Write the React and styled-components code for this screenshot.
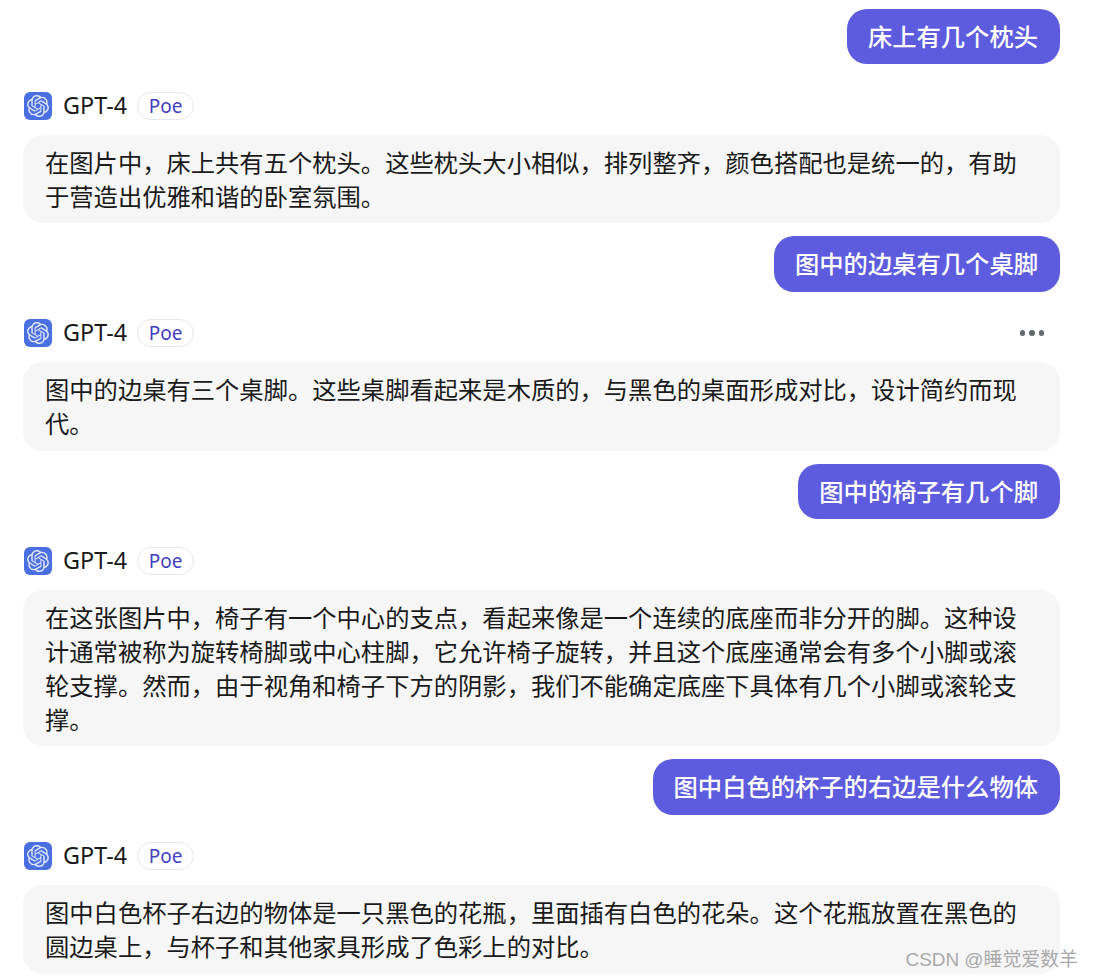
import styled, { createGlobalStyle } from "styled-components";
import { SiOpenai } from "react-icons/si";

const Global = createGlobalStyle`
  body {
    margin: 0;
    background: #fff;
    font-family: "Noto Sans", "Noto Sans CJK SC", sans-serif;
  }
`;

const messages = [
  {
    question: "床上有几个枕头",
    answer: "在图片中，床上共有五个枕头。这些枕头大小相似，排列整齐，颜色搭配也是统一的，有助于营造出优雅和谐的卧室氛围。",
  },
  {
    question: "图中的边桌有几个桌脚",
    answer: "图中的边桌有三个桌脚。这些桌脚看起来是木质的，与黑色的桌面形成对比，设计简约而现代。",
    hovered: true,
  },
  {
    question: "图中的椅子有几个脚",
    answer: "在这张图片中，椅子有一个中心的支点，看起来像是一个连续的底座而非分开的脚。这种设计通常被称为旋转椅脚或中心柱脚，它允许椅子旋转，并且这个底座通常会有多个小脚或滚轮支撑。然而，由于视角和椅子下方的阴影，我们不能确定底座下具体有几个小脚或滚轮支撑。",
  },
  {
    question: "图中白色的杯子的右边是什么物体",
    answer: "图中白色杯子右边的物体是一只黑色的花瓶，里面插有白色的花朵。这个花瓶放置在黑色的圆边桌上，与杯子和其他家具形成了色彩上的对比。",
  },
];

export default function App() {
  return (
    <>
      <Global />
      <Page>
        {messages.map((m) => (
          <Exchange key={m.question}>
            <UserBubble>{m.question}</UserBubble>
            <BotHeader>
              <BotInfo>
                <Avatar>
                  <SiOpenai size={22} color="#dfe6fb" />
                </Avatar>
                <BotName>GPT-4</BotName>
                <Tag>Poe</Tag>
              </BotInfo>
              {m.hovered && (
                <More>
                  <Dot />
                  <Dot />
                  <Dot />
                </More>
              )}
            </BotHeader>
            <BotBubble>{m.answer}</BotBubble>
          </Exchange>
        ))}
        <Watermark>CSDN @睡觉爱数羊</Watermark>
      </Page>
    </>
  );
}

const Page = styled.div`
  position: relative;
  box-sizing: border-box;
  width: 1093px;
  height: 979px;
  overflow: hidden;
  padding: 8.8px 33px 0 23px;
  display: flex;
  flex-direction: column;
  gap: 12.8px;
`;

const Exchange = styled.div`
  display: flex;
  flex-direction: column;
`;

const UserBubble = styled.div`
  align-self: flex-end;
  padding: 11px 22px 10.6px 21px;
  background: #5d5cde;
  border-radius: 20px;
  color: #fff;
  font-size: 24.3px;
  font-weight: 500;
  line-height: 34px;
`;

const BotHeader = styled.div`
  display: flex;
  align-items: center;
  justify-content: space-between;
  height: 28px;
  margin: 27.4px 0 15px;
  padding-right: 16px;
`;

const BotInfo = styled.div`
  display: flex;
  align-items: center;
`;

const Avatar = styled.div`
  box-sizing: border-box;
  width: 28px;
  height: 28px;
  margin-left: 1px;
  display: flex;
  align-items: center;
  justify-content: center;
  background: #4a6fe0;
  border-radius: 6px;
`;

const BotName = styled.span`
  margin-left: 11px;
  color: #1a1a1a;
  font-size: 23.4px;
  line-height: 26px;
  margin-bottom: 2px;
`;

const Tag = styled.span`
  box-sizing: border-box;
  width: 57px;
  height: 28px;
  margin-left: 10px;
  display: flex;
  align-items: center;
  justify-content: center;
  border: 1px solid #e6e6ee;
  border-radius: 14px;
  color: #3f3fc0;
  font-size: 19px;
`;

const More = styled.div`
  display: flex;
  gap: 4px;
`;

const Dot = styled.span`
  width: 5.5px;
  height: 5.5px;
  border-radius: 50%;
  background: #636a6e;
`;

const BotBubble = styled.div`
  padding: 11px 22px 9.6px;
  background: #f6f6f6;
  border-radius: 20px;
  color: #1a1a1a;
  font-size: 24.3px;
  line-height: 34px;
`;

const Watermark = styled.div`
  position: absolute;
  right: 15px;
  top: 947px;
  color: #a9a9a9;
  font-family: "Liberation Sans", "Noto Sans CJK SC", sans-serif;
  font-size: 18.9px;
  line-height: 26px;
  white-space: nowrap;
`;
